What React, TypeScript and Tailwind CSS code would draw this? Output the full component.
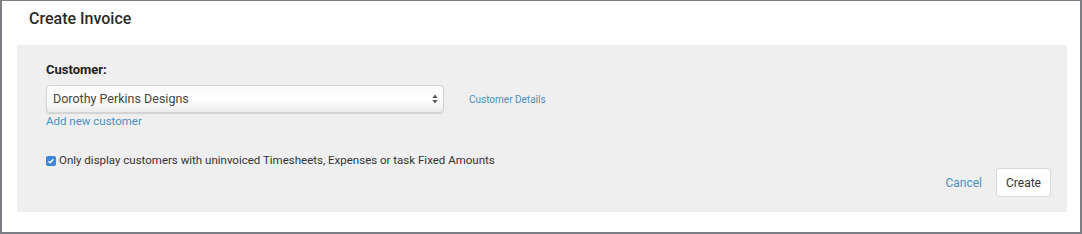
export default function App() {
  return (
    <div
      className="w-[1082px] h-[234px] bg-white border-t border-l-2 border-r-2 border-b-2 border-[#7b7f84] flex flex-col"
      style={{ fontFamily: 'Roboto, "Liberation Sans", sans-serif' }}
    >
      <h1 className="pl-[27px] pt-[8px] text-[16px] leading-[20px] font-medium text-[#2a2a2a]">
        Create Invoice
      </h1>

      <div className="ml-[15px] mt-[16px] w-[1050px] h-[167px] bg-[#efefef] flex flex-col pl-[29px] pr-[16px]">
        <label className="mt-[17px] text-[13px] leading-[16px] font-bold text-[#222]">Customer:</label>

        <div className="mt-[7px] flex items-center">
          <div className="w-[398px] h-[28px] rounded-[4px] border border-[#d4d4d4] bg-gradient-to-b from-[#fafafa] via-white to-[#ececec] shadow-[0_1px_1px_rgba(0,0,0,0.12)] flex items-center justify-between pl-[6px] pr-[5px]">
            <span className="text-[12.5px] text-[#444]">Dorothy Perkins Designs</span>
            <svg width="6" height="10" viewBox="0 0 6 10">
              <path d="M3 0.5 L5.6 4 L0.4 4 Z" fill="#555" />
              <path d="M3 9.5 L5.6 6 L0.4 6 Z" fill="#555" />
            </svg>
          </div>
          <a className="ml-[25px] text-[10px] text-[#4b8fc1]">Customer Details</a>
        </div>

        <a className="mt-[0px] text-[11.5px] leading-[16px] text-[#4b8fc1]">Add new customer</a>

        <div className="mt-[23px] flex items-center gap-[3px]">
          <span className="w-[10px] h-[10px] rounded-[2px] bg-[#3d85d6] flex items-center justify-center">
            <svg width="8" height="8" viewBox="0 0 8 8">
              <path d="M1.5 4.2 L3.2 5.8 L6.5 2.2" stroke="white" strokeWidth="1.4" fill="none" />
            </svg>
          </span>
          <span className="text-[11.5px] text-[#333]">
            Only display customers with uninvoiced Timesheets, Expenses or task Fixed Amounts
          </span>
        </div>

        <div className="-mt-[1px] flex items-center justify-end">
          <a className="text-[12px] text-[#4b8fc1] mr-[14px]">Cancel</a>
          <button className="w-[55px] h-[29px] rounded-[3px] bg-white border border-[#d9d9d9] text-[12px] text-[#333]">
            Create
          </button>
        </div>
      </div>
    </div>
  );
}
